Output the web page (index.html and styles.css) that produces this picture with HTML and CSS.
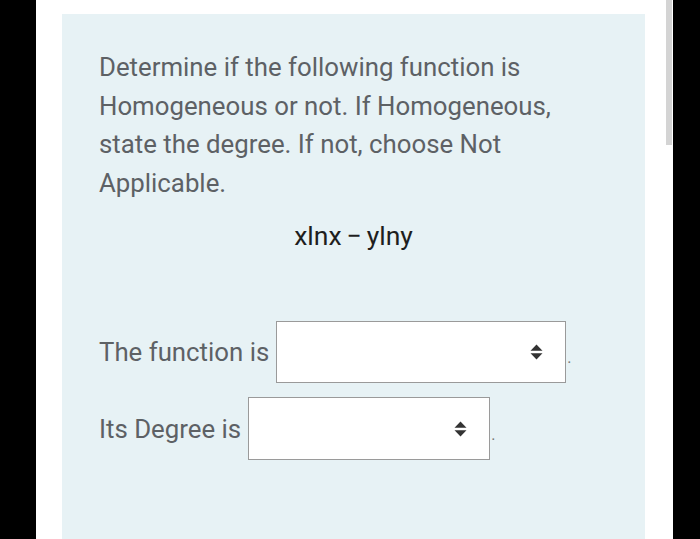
FILE: index.html
```html
<!DOCTYPE html>
<html>
<head>
<meta charset="utf-8">
<link rel="stylesheet" href="styles.css">
</head>
<body>
<div class="frame">
  <div class="side side-left"></div>
  <div class="screen">
    <div class="card">
      <p class="question">Determine if the following function is Homogeneous or not. If Homogeneous, state the degree. If not, choose Not Applicable.</p>
      <div class="formula">xlnx<span class="minus">&minus;</span>ylny</div>
      <div class="row row-first">
        <span class="label">The function is</span>
        <span class="select select-wide">
          <svg class="arrows" width="13" height="16" viewBox="0 0 13 16"><path d="M6.5 0.5 L12.5 6.8 H0.5 Z M6.5 15.5 L12.5 9.2 H0.5 Z" fill="#333"/></svg>
        </span>
        <span class="dot">.</span>
      </div>
      <div class="row">
        <span class="label">Its Degree is</span>
        <span class="select select-narrow">
          <svg class="arrows" width="13" height="16" viewBox="0 0 13 16"><path d="M6.5 0.5 L12.5 6.8 H0.5 Z M6.5 15.5 L12.5 9.2 H0.5 Z" fill="#333"/></svg>
        </span>
        <span class="dot">.</span>
      </div>
    </div>
    <div class="scrollbar"></div>
  </div>
  <div class="side side-right"></div>
</div>
</body>
</html>
```
FILE: styles.css
```css
html, body {
  margin: 0;
  padding: 0;
  height: 100%;
  overflow: hidden;
}
body {
  font-family: Roboto, "Liberation Sans", sans-serif;
  background: #000;
}
.frame {
  display: flex;
  height: 539px;
}
.side {
  background: #000;
}
.side-left {
  width: 36px;
}
.side-right {
  width: 27px;
}
.screen {
  position: relative;
  width: 637px;
  background: #fff;
  padding: 14px 0 0 26px;
  box-sizing: border-box;
}
.card {
  width: 583px;
  height: 525px;
  background: #e7f2f5;
  box-sizing: border-box;
  padding: 34px 0 0 37px;
}
.question {
  margin: 0;
  width: 475px;
  font-size: 25.8px;
  line-height: 38.5px;
  color: #5d6165;
}
.formula {
  margin: 16px 0 0 -37px;
  text-align: center;
  font-size: 26.5px;
  line-height: 36px;
  color: #1e1e1e;
}
.minus {
  margin: 0 5px;
}
.row {
  display: flex;
  align-items: center;
  font-size: 25.8px;
  line-height: 30px;
  color: #5d6165;
}
.row-first {
  margin-top: 67px;
}
.row + .row {
  margin-top: 14px;
}
.label {
  margin-right: 7px;
}
.select {
  display: flex;
  align-items: center;
  justify-content: flex-end;
  height: 62px;
  background: #fff;
  border: 1.5px solid #9a9a9a;
  box-sizing: border-box;
  padding-right: 22px;
}
.select-wide {
  width: 290px;
}
.select-narrow {
  width: 242px;
  height: 63px;
}
.dot {
  margin-left: 1px;
  font-size: 16px;
  line-height: 30px;
  padding-top: 12px;
  color: #777;
}
.scrollbar {
  position: absolute;
  top: 0;
  right: 1px;
  width: 6px;
  height: 145px;
  background: #d4d4d4;
}
```
